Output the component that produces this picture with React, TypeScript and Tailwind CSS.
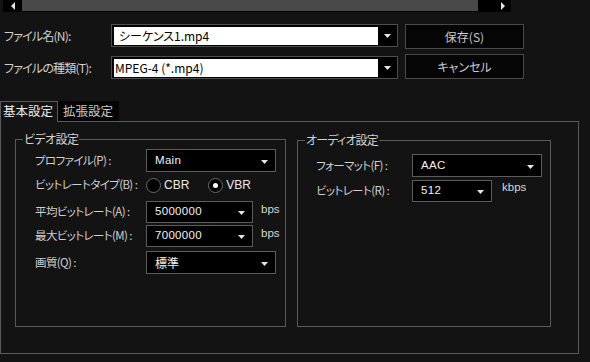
import React from "react";

const jp = "font-['Noto_Sans_CJK_JP',sans-serif] [font-feature-settings:'palt']";
const lat = "font-['Liberation_Sans',sans-serif]";

function Arrow({ className = "" }: { className?: string }) {
  return (
    <svg width="7" height="4" viewBox="0 0 7 4" className={className}>
      <polygon points="0,0 7,0 3.5,4" fill="#e6e6e6" />
    </svg>
  );
}

function Select({ w, h, value }: { w: string; h: string; value: string }) {
  return (
    <div
      className={`${w} ${h} shrink-0 border border-[#5c5c5c] bg-black flex items-center pl-[8px] pr-[7px] text-[11.5px] text-[#f2f2f2] ${lat}`}
    >
      <span className="flex-1 tracking-[0.3px]">{value}</span>
      <Arrow className="mt-[2px]" />
    </div>
  );
}

function FileInput({ value, pad }: { value: string; pad: string }) {
  return (
    <div className="w-[287px] h-[23px] shrink-0 border border-[#4e4e4e] bg-black flex items-center pl-[2px]">
      <div className={`w-[264px] h-[18px] bg-white flex items-center ${pad} text-[12px] text-black leading-none`}>
        {value}
      </div>
      <div className="flex-1 flex items-center justify-center">
        <Arrow />
      </div>
    </div>
  );
}

function Button({ label }: { label: string }) {
  return (
    <div className="w-[119px] h-[25px] shrink-0 border border-[#4a4a4a] bg-[#050505] flex items-center justify-center text-[12px] text-[#c9c9c9]">
      {label}
    </div>
  );
}

function Radio({ checked, label }: { checked?: boolean; label: string }) {
  return (
    <div className="flex items-center">
      <div className="w-[15px] h-[15px] rounded-full border border-[#6a6a6a] bg-black flex items-center justify-center">
        {checked && <div className="w-[5px] h-[5px] rounded-full bg-white" />}
      </div>
      <span className={`ml-[3px] text-[12px] text-[#e8e8e8] ${lat}`}>{label}</span>
    </div>
  );
}

function Label({ w, text }: { w: string; text: string }) {
  return (
    <div className={`${w} shrink-0 whitespace-nowrap text-[11.5px] tracking-[-0.6px] text-[#cfcfcf] leading-none`}>
      {text}
    </div>
  );
}

export default function App() {
  return (
    <div className={`w-[590px] h-[362px] bg-[#131313] overflow-hidden flex flex-col ${jp}`}>
      {/* scrollbar */}
      <div className="ml-[3px] w-[508px] h-[12px] bg-black flex">
        <div className="w-[19px] flex items-center justify-center pb-[1px]">
          <svg width="4" height="8" viewBox="0 0 4 8">
            <polygon points="4,0 4,8 0,4" fill="#e6e6e6" />
          </svg>
        </div>
        <div className="w-[456px] h-[11px] bg-[#494949]" />
        <div className="flex-1 flex items-center justify-end pr-[6px] pb-[1px]">
          <svg width="4" height="8" viewBox="0 0 4 8">
            <polygon points="0,0 0,8 4,4" fill="#e6e6e6" />
          </svg>
        </div>
      </div>

      {/* file rows */}
      <div className="mt-[12px] flex items-start h-[25px]">
        <div className="w-[111px] h-[23px] pl-[4px] flex items-center whitespace-nowrap text-[12px] tracking-[-0.8px] text-[#cfcfcf]">
          ファイル名(N):
        </div>
        <FileInput value="シーケンス1.mp4" pad="pl-[5px]" />
        <div className="ml-[7px]">
          <Button label="保存(S)" />
        </div>
      </div>
      <div className="mt-[5px] flex items-end h-[25px]">
        <div className="w-[111px] h-[23px] pl-[4px] flex items-center whitespace-nowrap text-[12px] tracking-[-0.8px] text-[#cfcfcf]">
          ファイルの種類(T):
        </div>
        <FileInput value="MPEG-4 (*.mp4)" pad="pl-[1px]" />
        <div className="ml-[7px]">
          <Button label="キャンセル" />
        </div>
      </div>

      {/* tabs */}
      <div className="mt-[22px] flex items-end h-[21px] w-[579px]">
        <div className="w-[58px] h-[21px] border-l border-t border-r border-[#5a5a5a] bg-[#131313] flex items-center pl-[2px] pb-[1px] text-[12.5px] text-[#ececec]">
          基本設定
        </div>
        <div className="w-[61px] h-[21px] border-b border-[#5a5a5a] bg-[#050505] flex items-center pl-[5px] text-[12.5px] text-[#c8c8c8]">
          拡張設定
        </div>
        <div className="flex-1 h-[21px] border-b border-[#5a5a5a]" />
      </div>

      {/* panel */}
      <div className="w-[579px] h-[232px] border-l border-r border-b border-[#5a5a5a] pt-[17px] pl-[14px] flex items-start">
        {/* video */}
        <div className="w-[271px] h-[188px] border border-[#5a5a5a] flex flex-col">
          <div className="-mt-[9px] ml-[7px] w-fit px-[1px] bg-[#131313] leading-[16px] text-[12px] tracking-[-0.6px] text-[#d2d2d2]">
            ビデオ設定
          </div>
          <div className="pl-[19px] flex flex-col">
            <div className="mt-[2px] h-[23px] flex items-center">
              <Label w="w-[111px]" text="プロファイル(P) :" />
              <Select w="w-[130px]" h="h-[23px]" value="Main" />
            </div>
            <div className="h-[26px] flex items-center">
              <Label w="w-[111px]" text="ビットレートタイプ(B) :" />
              <Radio label="CBR" />
              <div className="ml-[19px]">
                <Radio checked label="VBR" />
              </div>
            </div>
            <div className="mt-[3px] h-[22px] flex items-center">
              <Label w="w-[111px]" text="平均ビットレート(A) :" />
              <Select w="w-[107px]" h="h-[22px]" value="5000000" />
              <span className={`ml-[8px] -mt-[4px] text-[11.5px] text-[#d8d8d8] ${lat}`}>bps</span>
            </div>
            <div className="mt-[2px] h-[22px] flex items-center">
              <Label w="w-[111px]" text="最大ビットレート(M) :" />
              <Select w="w-[107px]" h="h-[22px]" value="7000000" />
              <span className={`ml-[8px] -mt-[4px] text-[11.5px] text-[#d8d8d8] ${lat}`}>bps</span>
            </div>
            <div className="mt-[4px] h-[23px] flex items-center">
              <Label w="w-[111px]" text="画質(Q) :" />
              <div className="w-[130px] h-[23px] shrink-0 border border-[#5c5c5c] bg-black flex items-center pl-[8px] pr-[7px] text-[12px] text-[#f2f2f2]">
                <span className="flex-1">標準</span>
                <Arrow className="mt-[2px]" />
              </div>
            </div>
          </div>
        </div>

        {/* audio */}
        <div className="ml-[11px] mt-[1px] w-[254px] h-[187px] border border-[#5a5a5a] flex flex-col">
          <div className="-mt-[9px] ml-[7px] w-fit px-[1px] bg-[#131313] leading-[16px] text-[12px] tracking-[-0.8px] text-[#d2d2d2]">
            オーディオ設定
          </div>
          <div className="pl-[18px] flex flex-col">
            <div className="mt-[6px] h-[23px] flex items-center">
              <Label w="w-[96px]" text="フォーマット(F) :" />
              <Select w="w-[130px]" h="h-[23px]" value="AAC" />
            </div>
            <div className="mt-[3px] h-[22px] flex items-center">
              <Label w="w-[96px]" text="ビットレート(R) :" />
              <Select w="w-[80px]" h="h-[22px]" value="512" />
              <span className={`ml-[10px] -mt-[6px] text-[11.5px] text-[#d8d8d8] ${lat}`}>kbps</span>
            </div>
          </div>
        </div>
      </div>
    </div>
  );
}
